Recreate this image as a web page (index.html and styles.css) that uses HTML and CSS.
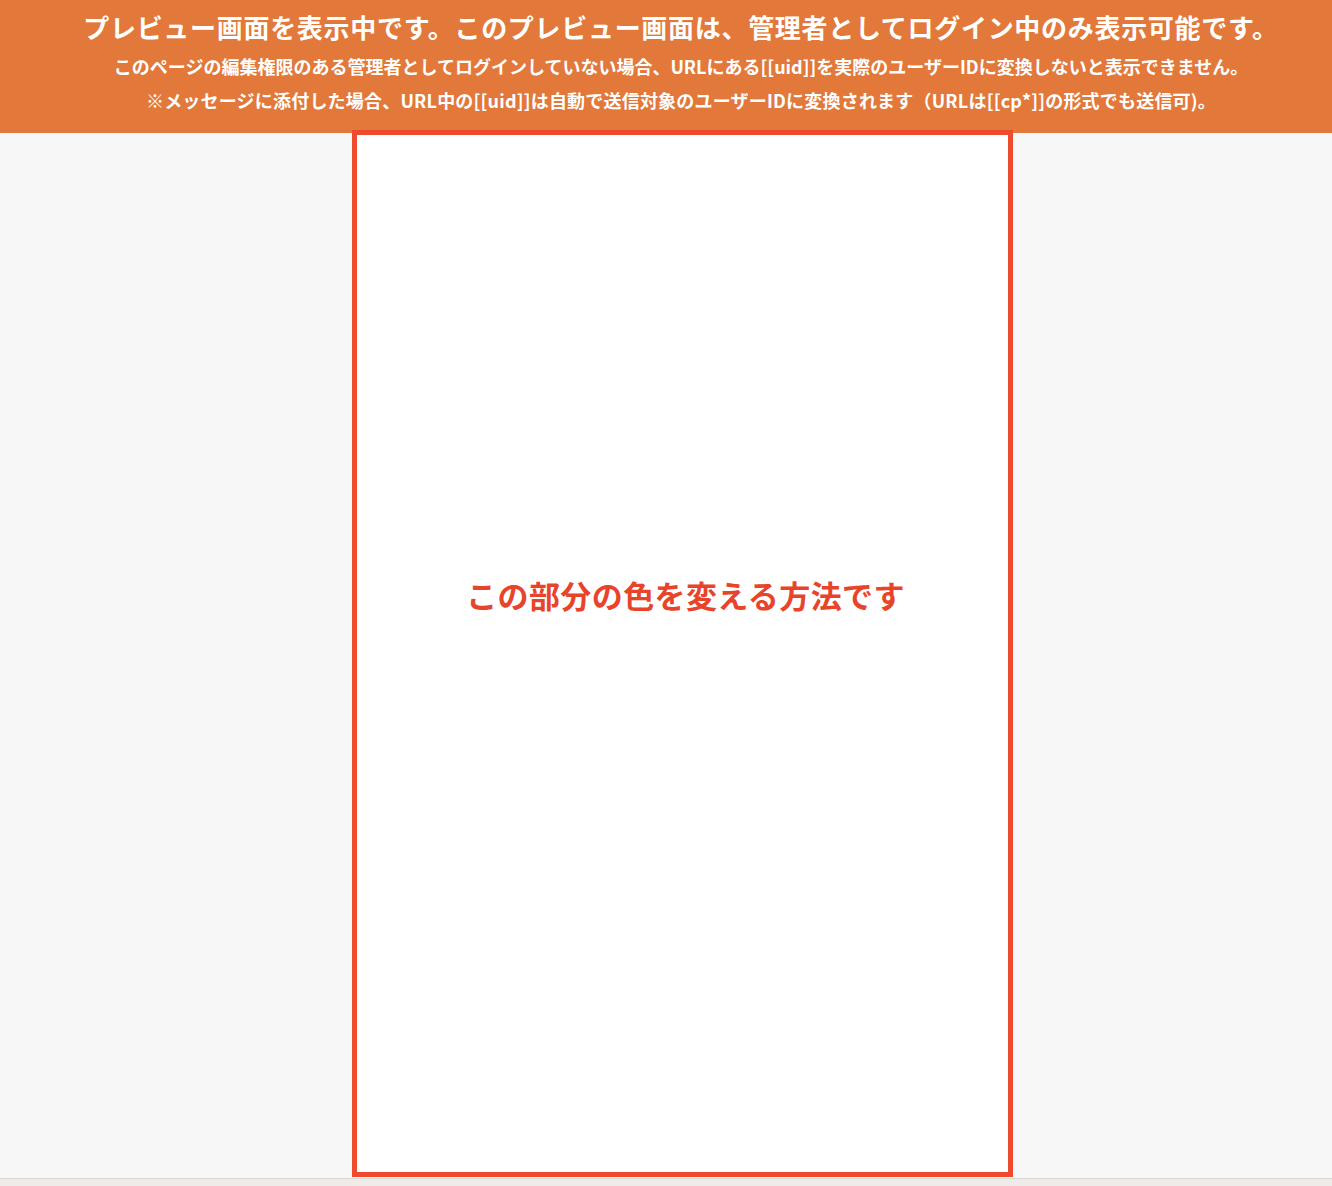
FILE: index.html
```html
<!DOCTYPE html>
<html lang="ja">

<head>
  <meta charset="utf-8">
  <title>プレビュー</title>
  <link rel="stylesheet" href="styles.css">
</head>

<body>
  <!-- Preview notice bar -->
  <div class="preview-bar">
    <h1 class="preview-title">プレビュー画面を表示中です。このプレビュー画面は、管理者としてログイン中のみ表示可能です。</h1>
    <p class="preview-note">このページの編集権限のある管理者としてログインしていない場合、URLにある[[uid]]を実際のユーザーIDに変換しないと表示できません。</p>
    <p class="preview-note preview-note-small">※メッセージに添付した場合、URL中の[[uid]]は自動で送信対象のユーザーIDに変換されます（URLは[[cp*]]の形式でも送信可)。</p>
  </div>

  <div class="stage">
    <div class="phone-frame">
      <p class="frame-text">この部分の色を変える方法です</p>
    </div>
  </div>

  <div class="footer-strip"></div>
</body>

</html>
```

FILE: styles.css
```css
/* Reset & base font */
body {
  margin: 0;
  font-family: "Noto Sans CJK JP", "Noto Sans", sans-serif;
  background-color: #f7f7f7;
  color: #333;
}

/* Orange notice bar on top */
.preview-bar {
  background-color: #e2783a;
  color: #fff;
  text-align: center;
  padding: 8px 0 16px 30px;
  height: 133px;
  box-sizing: border-box;
}

.preview-title {
  margin: 0;
  font-size: 26px;
  font-weight: 700;
  line-height: 38px;
  letter-spacing: 0.7px;
}

.preview-note {
  margin: 0;
  font-size: 18px;
  font-weight: 700;
  line-height: 34px;
}

.preview-title + .preview-note {
  margin-top: 3px;
}

/* last line runs a little wider in the original */
.preview-note-small {
  letter-spacing: 0.2px;
}

/* Page body holding the frame */
.stage {
  display: flex;
  justify-content: center;
  padding-left: 33px;
}

.phone-frame {
  width: 661px;
  height: 1047px;
  margin-top: -3px;
  /* sits slightly over the bar */
  border: 5px solid #ee4a2e;
  background-color: #fff;
  box-sizing: border-box;
  padding: 440px 0 0 6px;
  text-align: center;
}

.frame-text {
  margin: 0;
  font-size: 31px;
  font-weight: 700;
  line-height: 40px;
  letter-spacing: 0.4px;
  color: #e8442b;
}

/* Grey strip along the bottom edge */
.footer-strip {
  margin-top: 1px;
  height: 40px;
  border-top: 1px solid #d9d5d2;
  background-color: #efebe8;
}
```
